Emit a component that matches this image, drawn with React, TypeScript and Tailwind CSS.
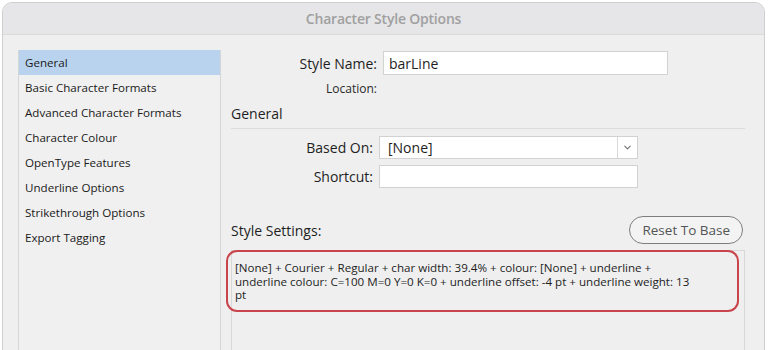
import { ChevronDown } from 'lucide-react';

const items = [
  'General',
  'Basic Character Formats',
  'Advanced Character Formats',
  'Character Colour',
  'OpenType Features',
  'Underline Options',
  'Strikethrough Options',
  'Export Tagging',
];

export default function App() {
  return (
    <div
      className="w-[768px] h-[350px] overflow-hidden bg-white p-[2px] pr-[3px]"
      style={{ fontFamily: '"Open Sans", "Liberation Sans", sans-serif' }}
    >
      <div className="h-[360px] rounded-t-[10px] border border-[#cfcfcf] bg-[#efefef] overflow-hidden">
        {/* title bar */}
        <div className="h-[32px] flex items-center justify-center bg-[#e6e6e8] border-b border-[#dadada]">
          <span className="text-[14px] font-semibold text-[#a0a0a0] tracking-[-0.2px]">
            Character Style Options
          </span>
        </div>

        <div className="flex pt-[15px] pl-[15px]">
          {/* left list */}
          <div className="w-[203px] h-[320px] border-x border-[#d6d6d6] bg-[#f0f0f0]">
            {items.map((it, i) => (
              <div
                key={it}
                className={`h-[25px] flex items-center pl-[6px] text-[11.6px] text-[#1a1a1a] ${
                  i === 0 ? 'bg-[#b9d3ef]' : ''
                }`}
              >
                {it}
              </div>
            ))}
          </div>

          {/* right side */}
          <div className="flex-1 pl-[10px] pr-[18px]">
            <div className="flex items-center h-[24px] mt-[1px]">
              <div className="w-[152px] text-right text-[14px] text-[#1e1e1e] pr-[6px]">Style Name:</div>
              <div className="w-[285px] h-[24px] bg-white border border-[#d2d2d2] flex items-center pl-[5px] text-[14px] text-[#1e1e1e]">
                barLine
              </div>
            </div>
            <div className="flex items-center h-[28px]">
              <div className="w-[152px] text-right text-[12px] text-[#2a2a2a] pr-[6px]">Location:</div>
            </div>

            <div className="text-[14px] text-[#1e1e1e] h-[20px] flex items-center">General</div>
            <div className="mt-[5px] h-px bg-[#dcdcdc] w-[514px]" />

            <div className="mt-[7px] flex items-center h-[23px]">
              <div className="w-[148px] text-right text-[14px] text-[#1e1e1e] pr-[6px]">Based On:</div>
              <div className="w-[259px] h-[23px] bg-white border border-[#d2d2d2] flex items-center">
                <div className="flex-1 pl-[8px] text-[14px] text-[#1e1e1e]">[None]</div>
                <div className="w-[20px] h-full border-l border-[#d8d8d8] flex items-center justify-center">
                  <ChevronDown size={11} strokeWidth={2.2} className="text-[#6e6e6e]" />
                </div>
              </div>
            </div>
            <div className="mt-[6px] flex items-center h-[23px]">
              <div className="w-[148px] text-right text-[14px] text-[#1e1e1e] pr-[6px]">Shortcut:</div>
              <div className="w-[259px] h-[23px] bg-white border border-[#d2d2d2]" />
            </div>

            <div className="mt-[28px] flex items-center justify-between h-[28px] w-[514px]">
              <div className="text-[14px] text-[#1e1e1e]">Style Settings:</div>
              <div className="h-[28px] mr-[2px] px-[12px] rounded-full border-[1.5px] border-[#7e7e7e] bg-[#f3f3f3] flex items-center text-[13.5px] text-[#555]">
                Reset To Base
              </div>
            </div>

            <div className="relative mt-[6px] w-[514px] h-[120px] border border-[#d8d8d8] bg-[#efefef]">
              <div className="absolute -left-[6px] -top-[1px] w-[513px] h-[62px] rounded-[11px] border-2 border-[#c9454b]" />
              <div className="ml-[3px] w-[466px] pt-[10px] text-[11.6px] leading-[13.5px] text-[#1e1e1e]">
                [None] + Courier + Regular + char width: 39.4% + colour: [None] + underline + underline colour: C=100 M=0 Y=0 K=0 + underline offset: -4 pt + underline weight: 13 pt
              </div>
            </div>
          </div>
        </div>
      </div>
    </div>
  );
}
